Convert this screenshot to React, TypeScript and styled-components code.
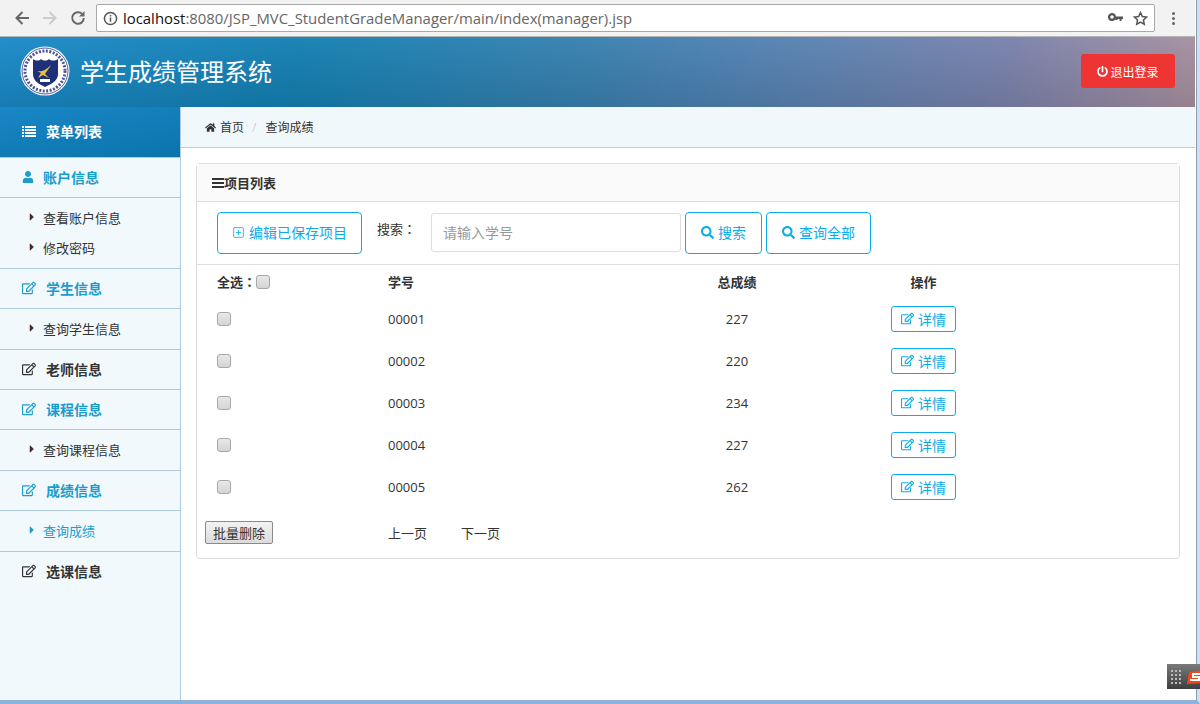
import React from 'react';
import styled, { createGlobalStyle } from 'styled-components';
import {
  FaHome,
  FaUser,
  FaRegEdit,
  FaCaretRight,
  FaSearch,
  FaPowerOff,
} from 'react-icons/fa';
import { SquarePlus } from 'lucide-react';

const GlobalStyle = createGlobalStyle`
  html, body {
    margin: 0;
    padding: 0;
    background: #fff;
  }
  * {
    box-sizing: border-box;
  }
  body {
    font-family: "Open Sans", "Noto Sans CJK SC", sans-serif;
    font-size: 13px;
    color: #333;
  }
`;

const Page = styled.div`
  position: relative;
  width: 1200px;
  height: 704px;
  display: flex;
  background: #fff;
  border-right: 3px solid #c9e1f8;
  border-bottom: 4px solid #8db2dc;
`;

const Win = styled.div`
  flex: 1;
  min-width: 0;
  display: flex;
  flex-direction: column;
  padding-right: 1px;
  border-right: 1px solid #8d9cab;
`;

const Chrome = styled.div`
  height: 37px;
  flex: none;
  display: flex;
  align-items: center;
  background: #f2f2f2;
  border-bottom: 1px solid #b5b5b5;
  padding: 0 0 0 14px;
`;

const NavButton = styled.button`
  width: 28px;
  height: 24px;
  flex: none;
  padding: 0;
  border: none;
  background: none;
  display: flex;
  align-items: center;
  justify-content: flex-start;
`;

const AddressBar = styled.div`
  margin-left: -2px;
  width: 1059px;
  height: 28px;
  flex: none;
  display: flex;
  align-items: center;
  background: #fff;
  border: 1px solid #a9a9a9;
  border-radius: 2px;
  padding: 0 6px;
  font-size: 14.9px;
`;

const UrlHost = styled.span`
  color: #111;
  margin-left: 5px;
`;

const UrlPath = styled.span`
  color: #666;
`;

const BarEnd = styled.div`
  margin-left: auto;
  display: flex;
  align-items: center;
  gap: 10px;
`;

const MenuDots = styled.div`
  margin-left: 17px;
  display: flex;
  flex-direction: column;
  gap: 2px;

  i {
    width: 3px;
    height: 3px;
    border-radius: 50%;
    background: #666;
  }
`;

const TopBar = styled.header`
  height: 70px;
  flex: none;
  display: flex;
  align-items: center;
  padding: 0 20px 2px;
  background:
    linear-gradient(180deg, rgba(255, 255, 255, 0.04), rgba(0, 0, 0, 0.1)),
    linear-gradient(100deg, #1a8ac8 0%, #1380b2 25%, #3a80b0 50%, #5a82b2 67%, #7a82ac 84%, #a8909f 100%);
`;

const Crest = styled.svg`
  width: 50px;
  height: 50px;
  flex: none;
`;

const SiteTitle = styled.h1`
  margin: 0 0 0 10px;
  font-size: 24px;
  font-weight: 400;
  line-height: 30px;
  color: #fff;
  font-family: "Noto Sans CJK SC", sans-serif;
`;

const LogoutButton = styled.button`
  margin-left: auto;
  width: 94px;
  height: 34px;
  border: none;
  border-radius: 3px;
  background: #ef3434;
  color: #fff;
  display: flex;
  align-items: center;
  justify-content: center;
  gap: 2px;
  font-size: 12px;
  font-family: "Noto Sans CJK SC", sans-serif;
`;

const Body = styled.div`
  flex: 1;
  display: flex;
  min-height: 0;
`;

const Sidebar = styled.aside`
  width: 181px;
  flex: none;
  background: #f1f9fd;
  border-right: 1px solid #aecbdb;
`;

const SidebarHead = styled.div`
  height: 51px;
  display: flex;
  align-items: center;
  gap: 10px;
  padding: 0 0 2px 22px;
  color: #fff;
  font-weight: 700;
  font-size: 14px;
  background: linear-gradient(170deg, #1987c6, #0a74ab);
  border-bottom: 1px solid #aecbdb;
`;

const Group = styled.div<{ $active?: boolean; $gap?: number; $last?: boolean }>`
  height: 40px;
  display: flex;
  align-items: center;
  gap: ${({ $gap }) => $gap ?? 10}px;
  padding: 0 0 2px 22px;
  font-weight: 700;
  font-size: 14px;
  color: ${({ $active }) => ($active ? '#1a9ccd' : '#333')};
  border-bottom: ${({ $last }) => ($last ? 'none' : '1px solid #aecbdb')};
  svg {
    flex: none;
  }
`;

const SubList = styled.ul`
  margin: 0;
  padding: 4px 0 6px;
  list-style: none;
  border-bottom: 1px solid #aecbdb;
`;

const SubItem = styled.li<{ $active?: boolean }>`
  height: 30px;
  display: flex;
  align-items: center;
  gap: 5px;
  padding-left: 26px;
  font-size: 13px;
  color: ${({ $active }) => ($active ? '#1a9ccd' : '#333')};
  svg {
    color: ${({ $active }) => ($active ? '#1a9ccd' : '#4a2a2a')};
    flex: none;
  }
`;

const Main = styled.main`
  flex: 1;
  min-width: 0;
  display: flex;
  flex-direction: column;
`;

const Breadcrumb = styled.nav`
  height: 41px;
  flex: none;
  display: flex;
  align-items: center;
  padding-left: 24px;
  font-size: 12px;
  background: #f1f8fc;
  border-bottom: 1px solid #bcd0da;
  color: #333;
`;

const HomeIcon = styled(FaHome)`
  margin-right: 4px;
`;

const Sep = styled.span`
  margin: 0 9px 0 8px;
  color: #ccc;
`;

const Panel = styled.section`
  margin: 15px 15px 0 15px;
  border: 1px solid #ddd;
  border-radius: 4px;
  height: 396px;
  display: flex;
  flex-direction: column;
`;

const PanelHead = styled.div`
  height: 38px;
  flex: none;
  display: flex;
  align-items: center;
  padding-left: 15px;
  background: #fafafa;
  border-bottom: 1px solid #ddd;
  font-weight: 700;
  font-size: 13px;
  color: #333;
`;

const Toolbar = styled.div`
  height: 63px;
  flex: none;
  display: flex;
  align-items: center;
  padding-left: 20px;
  border-bottom: 1px solid #ddd;
`;

const OutlineButton = styled.button<{ $w: number }>`
  width: ${({ $w }) => $w}px;
  height: 42px;
  flex: none;
  margin-right: 4px;
  border: 1px solid #0cabec;
  border-radius: 4px;
  background: #fff;
  color: #0cabec;
  display: flex;
  align-items: center;
  justify-content: center;
  gap: 4px;
  padding: 0 0 2px;
  font-size: 14px;
  font-family: "Noto Sans CJK SC", sans-serif;
`;

const SearchLabel = styled.label`
  margin: -10px 15px 0 11px;
  font-size: 13px;
  color: #333;
`;

const ColonMark = styled.span`
  font-family: "Noto Sans CJK TC", sans-serif;
`;

const SearchInput = styled.input`
  width: 250px;
  height: 39px;
  margin: 0 4px 2px 0;
  flex: none;
  border: 1px solid #ddd;
  border-radius: 3px;
  padding: 0 11px;
  font-size: 14px;
  font-family: "Noto Sans CJK SC", sans-serif;

  &::placeholder {
    color: #999;
  }
`;

const Row = styled.div<{ $h: number }>`
  height: ${({ $h }) => $h}px;
  flex: none;
  display: grid;
  grid-template-columns: 171px 266px 166px 207px;
  align-items: center;
  padding-left: 20px;
  font-size: 13px;
  color: #333;
`;

const HeadCell = styled.div<{ $center?: boolean }>`
  display: flex;
  align-items: center;
  font-weight: 700;
  font-size: 13px;
  justify-content: ${({ $center }) => ($center ? 'center' : 'flex-start')};
`;

const Cell = styled.div<{ $center?: boolean }>`
  text-align: ${({ $center }) => ($center ? 'center' : 'left')};
`;

const CheckCell = styled.div`
  display: flex;
  align-items: center;
`;

const OpCell = styled.div`
  display: flex;
  justify-content: center;
`;

const Check = styled.span`
  display: inline-block;
  width: 14px;
  height: 14px;
  border: 1px solid #a8a8a8;
  border-radius: 3px;
  background: linear-gradient(#e8e8e8, #d4d4d4);
`;

const DetailButton = styled.button`
  width: 65px;
  height: 26px;
  border: 1px solid #0cabec;
  border-radius: 3px;
  background: #fff;
  color: #0cabec;
  display: flex;
  align-items: center;
  justify-content: center;
  gap: 4px;
  padding: 0 0 1px;
  font-size: 14px;
  font-family: "Noto Sans CJK SC", sans-serif;
`;

const Footer = styled.div`
  display: grid;
  grid-template-columns: 183px 73px auto;
  justify-content: start;
  align-items: center;
  height: 48px;
  padding-left: 8px;
  font-size: 13px;
`;

const BulkButton = styled.button`
  width: 68px;
  height: 23px;
  padding: 0;
  border: 1px solid #8a8a8a;
  border-radius: 2px;
  background: linear-gradient(#f2f2f2, #dcdcdc);
  color: #333;
  font-size: 13px;
  font-family: "Noto Sans CJK SC", sans-serif;
`;

const ImeBadge = styled.div`
  position: absolute;
  right: -3px;
  bottom: 11px;
  width: 33px;
  height: 25px;
  display: flex;
  align-items: center;
  padding-left: 4px;
  gap: 6px;
  overflow: hidden;
  background: linear-gradient(#7a7a7a, #3e3e3e);

  svg {
    flex: none;
  }
`;

const rows = [
  { id: '00001', total: 227 },
  { id: '00002', total: 220 },
  { id: '00003', total: 234 },
  { id: '00004', total: 227 },
  { id: '00005', total: 262 },
];

const Crestmark = () => (
  <Crest viewBox="0 0 50 50">
    <circle cx="25" cy="25" r="24.5" fill="#fff" />
    <circle cx="25" cy="25" r="23" fill="none" stroke="#27357f" strokeWidth="0.8" />
    <circle cx="25" cy="25" r="20" fill="none" stroke="#4a5596" strokeWidth="3" strokeDasharray="2 1.5" />
    <circle cx="25" cy="25" r="16.5" fill="#fff" />
    <path
      d="M13 13c3 2 6 2 8 0 2 2 6 2 8 0 2 2 6 2 9 0v15c0 7-7 10-13 13-6-3-12-6-12-13z"
      fill="#1f2f78"
    />
    <path d="M17 25c4 1 8 0 14-6-3 5-5 7-6 9l4 4-6-3-5 3 3-5z" fill="#e8c23a" />
    <rect x="20" y="33" width="10" height="3" fill="#fff" />
  </Crest>
);

const App: React.FC = () => (
  <>
    <GlobalStyle />
    <Page>
      <Win>
        <Chrome>
          <NavButton>
            <svg width="16" height="16" viewBox="0 0 16 16" fill="none" stroke="#666" strokeWidth="2">
              <path d="M15 8H2.500M8.500 2 2.500 8l6 6" />
            </svg>
          </NavButton>
          <NavButton>
            <svg width="16" height="16" viewBox="0 0 16 16" fill="none" stroke="#ccc" strokeWidth="2">
              <path d="M1 8h12.500M7.500 2l6 6-6 6" />
            </svg>
          </NavButton>
          <NavButton>
            <svg width="16" height="16" viewBox="0 0 16 16" fill="none" stroke="#666" strokeWidth="2">
              <path d="M13.800 8a5.800 5.800 0 1 1-1.700-4.100" />
              <path d="M14.500 1v5.500H9z" fill="#666" stroke="none" />
            </svg>
          </NavButton>
          <AddressBar>
            <svg width="15" height="15" viewBox="0 0 16 16" fill="none" stroke="#555" strokeWidth="1.6">
              <circle cx="8" cy="8" r="6.500" />
              <path d="M8 7v4.500M8 4.200v1.600" />
            </svg>
            <UrlHost>localhost</UrlHost>
            <UrlPath>:8080/JSP_MVC_StudentGradeManager/main/index(manager).jsp</UrlPath>
            <BarEnd>
              <svg width="15" height="10" viewBox="0 0 15 10" fill="#555">
                <path d="M4 0a4 4 0 1 1-3.900 5A4 4 0 0 1 4 0zm0 2.200A1.800 1.800 0 1 0 4 5.800a1.800 1.800 0 0 0 0-3.600zM7.500 3.500H15V6h-1.500v2h-2V6H9.500v1H7.500z" />
              </svg>
              <svg width="15" height="15" viewBox="0 0 24 24" fill="none" stroke="#555" strokeWidth="2.400">
                <path d="M12 2.500l2.900 6.300 6.800.8-5 4.700 1.300 6.800-6-3.400-6 3.400 1.300-6.800-5-4.700 6.800-.8z" />
              </svg>
            </BarEnd>
          </AddressBar>
          <MenuDots>
            <i />
            <i />
            <i />
          </MenuDots>
        </Chrome>

        <TopBar>
          <Crestmark />
          <SiteTitle>学生成绩管理系统</SiteTitle>
          <LogoutButton>
            <FaPowerOff size={11} />
            退出登录
          </LogoutButton>
        </TopBar>

        <Body>
          <Sidebar>
            <SidebarHead>
              <svg width="14" height="11" viewBox="0 0 14 11" fill="#fff">
                <path d="M0 0h2v2H0zM3 0h11v2H3zM0 3h2v2H0zM3 3h11v2H3zM0 6h2v2H0zM3 6h11v2H3zM0 9h2v2H0zM3 9h11v2H3z" />
              </svg>
              菜单列表
            </SidebarHead>
            <Group $active $gap={9}>
              <FaUser size={12} />
              账户信息
            </Group>
            <SubList>
              <SubItem>
                <FaCaretRight size={12} />
                查看账户信息
              </SubItem>
              <SubItem>
                <FaCaretRight size={12} />
                修改密码
              </SubItem>
            </SubList>
            <Group $active>
              <FaRegEdit size={14} />
              学生信息
            </Group>
            <SubList>
              <SubItem>
                <FaCaretRight size={12} />
                查询学生信息
              </SubItem>
            </SubList>
            <Group>
              <FaRegEdit size={14} />
              老师信息
            </Group>
            <Group $active>
              <FaRegEdit size={14} />
              课程信息
            </Group>
            <SubList>
              <SubItem>
                <FaCaretRight size={12} />
                查询课程信息
              </SubItem>
            </SubList>
            <Group $active>
              <FaRegEdit size={14} />
              成绩信息
            </Group>
            <SubList>
              <SubItem $active>
                <FaCaretRight size={12} />
                查询成绩
              </SubItem>
            </SubList>
            <Group $last>
              <FaRegEdit size={14} />
              选课信息
            </Group>
          </Sidebar>

          <Main>
            <Breadcrumb>
              <HomeIcon size={11} />
              首页
              <Sep>/</Sep>
              查询成绩
            </Breadcrumb>
            <Panel>
              <PanelHead>
                <svg width="12" height="10" viewBox="0 0 12 10" fill="#333">
                  <path d="M0 0h12v2H0zM0 4h12v2H0zM0 8h12v2H0z" />
                </svg>
                项目列表
              </PanelHead>
              <Toolbar>
                <OutlineButton $w={145}>
                  <SquarePlus size={13} strokeWidth={1.5} />
                  编辑已保存项目
                </OutlineButton>
                <SearchLabel>
                  搜索<ColonMark>：</ColonMark>
                </SearchLabel>
                <SearchInput placeholder="请输入学号" />
                <OutlineButton $w={77}>
                  <FaSearch size={13} />
                  搜索
                </OutlineButton>
                <OutlineButton $w={105}>
                  <FaSearch size={13} />
                  查询全部
                </OutlineButton>
              </Toolbar>
              <Row $h={33}>
                <HeadCell>
                  全选<ColonMark>：</ColonMark>
                  <Check />
                </HeadCell>
                <HeadCell>学号</HeadCell>
                <HeadCell $center>总成绩</HeadCell>
                <HeadCell $center>操作</HeadCell>
              </Row>
              {rows.map((r) => (
                <Row $h={42} key={r.id}>
                  <CheckCell>
                    <Check />
                  </CheckCell>
                  <Cell>{r.id}</Cell>
                  <Cell $center>{r.total}</Cell>
                  <OpCell>
                    <DetailButton>
                      <FaRegEdit size={13} />
                      详情
                    </DetailButton>
                  </OpCell>
                </Row>
              ))}
              <Footer>
                <BulkButton>批量删除</BulkButton>
                <span>上一页</span>
                <span>下一页</span>
              </Footer>
            </Panel>
          </Main>
        </Body>
      </Win>

      <ImeBadge>
        <svg width="10" height="16" viewBox="0 0 10 16" fill="#bbb">
          <path d="M0 1h2v2H0zM4 1h2v2H4zM8 1h2v2H8zM0 5h2v2H0zM4 5h2v2H4zM8 5h2v2H8zM0 9h2v2H0zM4 9h2v2H4zM8 9h2v2H8zM0 13h2v2H0zM4 13h2v2H4zM8 13h2v2H8z" />
        </svg>
        <svg width="16" height="16" viewBox="0 0 16 16">
          <path d="M2 3 16 1v13L0 15z" fill="#f0481c" />
          <path d="M14 5H6v3h6v3H3" fill="none" stroke="#fff" strokeWidth="2" />
        </svg>
      </ImeBadge>
    </Page>
  </>
);

export default App;
